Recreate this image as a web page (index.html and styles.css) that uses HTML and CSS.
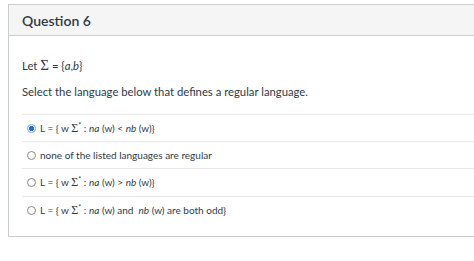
FILE: index.html
```html
<!DOCTYPE html>
<html>
<head>
<meta charset="utf-8">
<link rel="stylesheet" href="styles.css">
</head>
<body>
<div class="card">
  <div class="header">Question 6</div>
  <div class="content">
    <p class="line">Let <span class="sig">Σ</span> = {<i>a</i>,<i>b</i>}</p>
    <p class="line prompt">Select the language below that defines a regular language.</p>
    <div class="options">
      <div class="opt"><span class="radio checked"></span><span>L = { w <span class="sig">Σ</span><sup>*</sup> : <i>na</i> (w) &lt; <i>nb</i> (w)}</span></div>
      <div class="opt"><span class="radio"></span><span>none of the listed languages are regular</span></div>
      <div class="opt"><span class="radio"></span><span>L = { w <span class="sig">Σ</span><sup>*</sup> : <i>na</i> (w) &gt; <i>nb</i> (w)}</span></div>
      <div class="opt"><span class="radio"></span><span>L = { w <span class="sig">Σ</span><sup>*</sup> : <i>na</i> (w) and&nbsp; <i>nb</i> (w) are both odd}</span></div>
    </div>
  </div>
</div>
</body>
</html>
```

FILE: styles.css
```css
html, body { margin: 0; padding: 0; background: #fff; overflow: hidden; }
body { width: 474px; height: 261px; font-family: Lato, "Liberation Sans", sans-serif; color: #2d3b45; }
.card {
  margin: 4px 0 0 8px;
  width: 480px;
  height: 233px;
  border: 1px solid #c7cdd1;
  box-sizing: border-box;
}
.header {
  height: 30px;
  background: #f5f5f5;
  border-bottom: 1px solid #c7cdd1;
  padding-left: 13px;
  display: flex;
  align-items: center;
  font-size: 14px;
  font-weight: 600;
  color: #2d3b45;
}
.content { padding: 21px 0 0 13px; }
.line { margin: 0; font-size: 11.3px; line-height: 16px; }
.prompt { margin-top: 10px; }
.sig { font-family: "Liberation Serif", serif; font-size: 15px; }
.options { margin-top: 14px; }
.opt {
  border-top: 1px solid #e8e8e8;
  height: 26px;
  display: flex;
  align-items: center;
  font-size: 10px;
  color: #2d3b45;
}
.opt:nth-child(3) { height: 27px; }
.opt .sig { font-size: 12px; }
sup { font-size: 7px; vertical-align: 4px; line-height: 0; }
.radio {
  width: 9px; height: 9px;
  border: 1px solid #8a8a8a;
  border-radius: 50%;
  box-sizing: border-box;
  margin: 0 4px 0 5px;
  flex: none;
  background: #fff;
}
.radio.checked {
  border-color: #7fa8dc;
  background: radial-gradient(circle, #1a6fe0 0 2.4px, #fff 2.9px);
}
```
